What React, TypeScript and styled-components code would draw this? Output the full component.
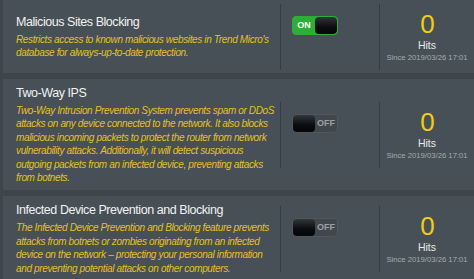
import React from "react";
import styled, { createGlobalStyle } from "styled-components";

const Global = createGlobalStyle`
  html, body { margin: 0; padding: 0; background: #3e454b; overflow: hidden; }
  body { font-family: "Liberation Sans", Arial, sans-serif; }
`;

const List = styled.div`
  display: flex;
  flex-direction: column;
  gap: 6px;
  padding-left: 3px;
  width: 471px;
`;

const Panel = styled.section`
  display: flex;
  align-items: center;
  min-height: 73px;
  background: #475056;
`;

const TextCol = styled.div`
  width: 264px;
  flex: none;
  padding: 7px 0 6px 13px;
`;

const Title = styled.div`
  color: #f2f2f2;
  font-size: 12.5px;
  letter-spacing: -0.45px;
  line-height: 15px;
`;

const Desc = styled.div`
  margin-top: 3px;
  color: #e6c01f;
  font-style: italic;
  font-size: 10px;
  letter-spacing: -0.36px;
  line-height: 13.4px;
  white-space: nowrap;
`;

const Cell = styled.div<{ $w: number }>`
  width: ${(p) => p.$w}px;
  height: 66px;
  flex: none;
  border-left: 1px solid #363c41;
  box-sizing: border-box;
`;

const ToggleCell = styled(Cell)`
  padding: 12px 0 0 11px;
`;

const StatsCell = styled(Cell)`
  display: flex;
  flex-direction: column;
  align-items: center;
  justify-content: center;
  padding-top: 1px;
`;

const Switch = styled.div<{ $on: boolean }>`
  display: flex;
  flex-direction: ${(p) => (p.$on ? "row" : "row-reverse")};
  width: 46px;
  height: 19px;
  border-radius: 4px;
  box-sizing: border-box;
  overflow: hidden;
  background: ${(p) => (p.$on ? "#2eae37" : "#40484d")};
  border: 1px solid ${(p) => (p.$on ? "#2eae37" : "#50585e")};
`;

const SwitchLabel = styled.span<{ $on: boolean }>`
  flex: 1;
  display: flex;
  align-items: center;
  justify-content: center;
  font-size: 9px;
  font-weight: bold;
  color: ${(p) => (p.$on ? "#ffffff" : "#9aa1a6")};
`;

const Knob = styled.span`
  width: 22px;
  flex: none;
  border-radius: 4px;
  background: linear-gradient(#30363a, #0a0c0e 60%, #050607);
`;

const Count = styled.div`
  color: #f2cc10;
  font-size: 26px;
  line-height: 26px;
  letter-spacing: -1px;
`;

const Hits = styled.div`
  color: #e6e8ea;
  font-size: 10.5px;
  line-height: 13px;
  margin-top: 2px;
`;

const Since = styled.div`
  color: #a3abb1;
  font-size: 7.7px;
  line-height: 12px;
`;

type Item = { title: string; lines: string[]; on: boolean };

const items: Item[] = [
  {
    title: "Malicious Sites Blocking",
    lines: [
      "Restricts access to known malicious websites in Trend Micro's",
      "database for always-up-to-date protection.",
    ],
    on: true,
  },
  {
    title: "Two-Way IPS",
    lines: [
      "Two-Way Intrusion Prevention System prevents spam or DDoS",
      "attacks on any device connected to the network. It also blocks",
      "malicious incoming packets to protect the router from network",
      "vulnerability attacks. Additionally, it will detect suspicious",
      "outgoing packets from an infected device, preventing attacks",
      "from botnets.",
    ],
    on: false,
  },
  {
    title: "Infected Device Prevention and Blocking",
    lines: [
      "The Infected Device Prevention and Blocking feature prevents",
      "attacks from botnets or zombies originating from an infected",
      "device on the network \u2013 protecting your personal information",
      "and preventing potential attacks on other computers.",
    ],
    on: false,
  },
];

export default function App() {
  return (
    <>
      <Global />
      <List>
        {items.map((it) => (
          <Panel key={it.title}>
            <TextCol>
              <Title>{it.title}</Title>
              <Desc>
                {it.lines.map((l, i) => (
                  <React.Fragment key={i}>
                    {l}
                    {i < it.lines.length - 1 && <br />}
                  </React.Fragment>
                ))}
              </Desc>
            </TextCol>
            <ToggleCell $w={99}>
              <Switch $on={it.on}>
                <SwitchLabel $on={it.on}>{it.on ? "ON" : "OFF"}</SwitchLabel>
                <Knob />
              </Switch>
            </ToggleCell>
            <StatsCell $w={95}>
              <Count>0</Count>
              <Hits>Hits</Hits>
              <Since>Since 2019/03/26 17:01</Since>
            </StatsCell>
          </Panel>
        ))}
      </List>
    </>
  );
}
